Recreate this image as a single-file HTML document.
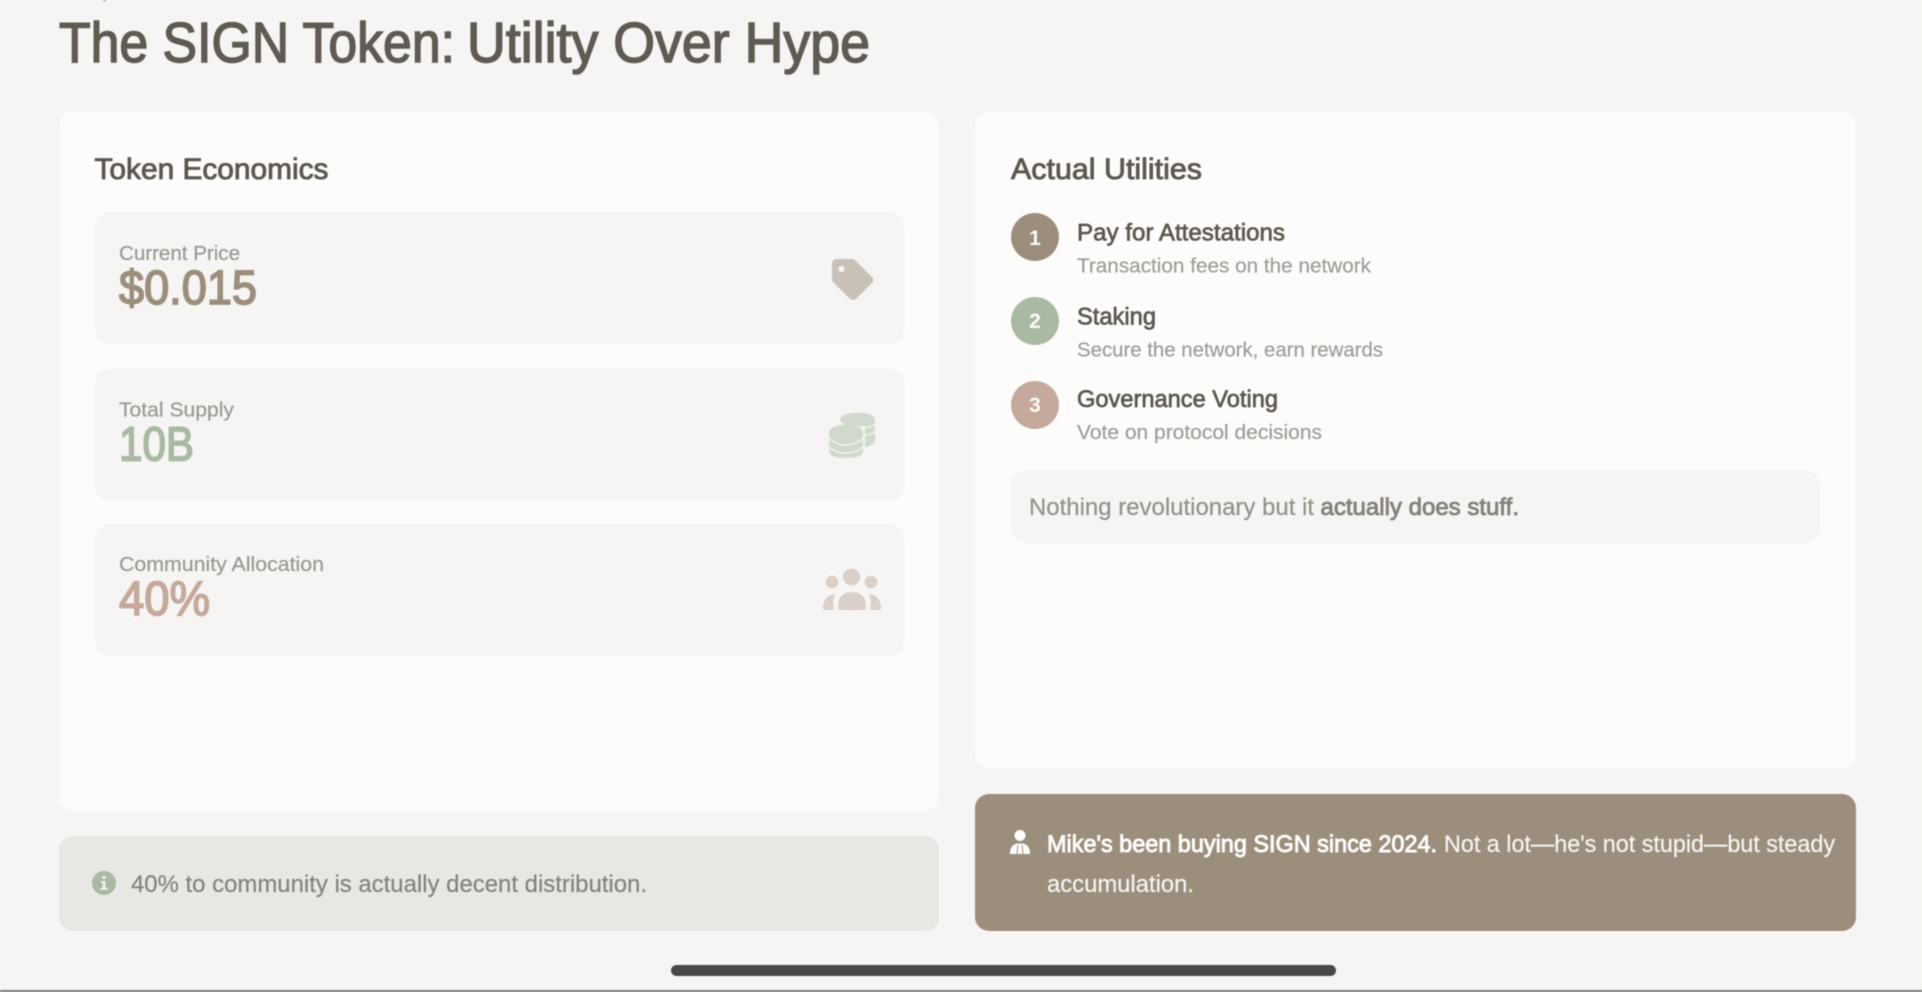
<!DOCTYPE html>
<html lang="en">
<head>
<meta charset="utf-8">
<title>The SIGN Token: Utility Over Hype</title>
<style>
html,body{margin:0;padding:0;background:#f6f5f3;}
#page{position:relative;width:1922px;height:992px;overflow:hidden;background:#f6f5f3;filter:blur(.45px);}
.box{position:absolute;box-sizing:border-box;}
.card{background:#fdfcfa;border-radius:15px;}
.stat{background:#f6f5f3;border-radius:14px;left:95px;width:809px;height:132px;}
svg{position:absolute;left:0;top:0;}
text{font-family:"Liberation Sans",sans-serif;white-space:pre;}
</style>
</head>
<body>
<div id="page">
  <div class="box card" style="left:59px;top:111px;width:880px;height:700px"></div>
  <div class="box card" style="left:975px;top:111px;width:881px;height:658px"></div>
  <div class="box stat" style="top:212px"></div>
  <div class="box stat" style="top:369px"></div>
  <div class="box stat" style="top:524px"></div>
  <div class="box" style="left:1011px;top:470px;width:809px;height:73px;background:#f6f5f3;border-radius:14px"></div>
  <div class="box" style="left:59px;top:836px;width:880px;height:95px;background:#e7e8e3;border-radius:14px"></div>
  <div class="box" style="left:975px;top:794px;width:881px;height:137px;background:#9c8e7c;border-radius:14px"></div>
  <div class="box" style="left:671px;top:965px;width:665px;height:11px;background:#484846;border-radius:6px"></div>
  <div class="box" style="left:0;top:990px;width:1922px;height:2px;background:#7a7a78"></div>
  <div class="box" style="left:103px;top:0;width:3px;height:1px;background:#a5a29d"></div>

  <svg width="1922" height="992" viewBox="0 0 1922 992" xmlns="http://www.w3.org/2000/svg">
    <!-- heading -->
    <text x="59" y="62" font-size="57" fill="#5f5a52" stroke="#5f5a52" stroke-width="1.500" textLength="396" lengthAdjust="spacingAndGlyphs">The SIGN Token:</text>
    <text x="467" y="62" font-size="57" fill="#5f5a52" stroke="#5f5a52" stroke-width="1.500" textLength="403" lengthAdjust="spacingAndGlyphs">Utility Over Hype</text>

    <!-- left card -->
    <text x="94.500" y="179" font-size="29.500" fill="#5c5750" stroke="#5c5750" stroke-width=".85" textLength="234" lengthAdjust="spacingAndGlyphs">Token Economics</text>

    <text x="119" y="260" font-size="20.500" fill="#9b9893" stroke="#9b9893" stroke-width=".2" textLength="121" lengthAdjust="spacingAndGlyphs">Current Price</text>
    <text x="119" y="304" font-size="48" fill="#9c8e7c" stroke="#9c8e7c" stroke-width="1.700" textLength="138" lengthAdjust="spacingAndGlyphs">$0.015</text>

    <text x="119" y="416.500" font-size="20.500" fill="#9b9893" stroke="#9b9893" stroke-width=".2" textLength="115" lengthAdjust="spacingAndGlyphs">Total Supply</text>
    <text x="119" y="460.500" font-size="48" fill="#a9b9a3" stroke="#a9b9a3" stroke-width="1.700" textLength="75" lengthAdjust="spacingAndGlyphs">10B</text>

    <text x="119" y="571" font-size="20.500" fill="#9b9893" stroke="#9b9893" stroke-width=".2" textLength="205" lengthAdjust="spacingAndGlyphs">Community Allocation</text>
    <text x="119" y="615" font-size="48" fill="#c5a99a" stroke="#c5a99a" stroke-width="1.700" textLength="91" lengthAdjust="spacingAndGlyphs">40%</text>

    <!-- tag icon -->
    <path fill="#c9c1b8" d="M837 259H851Q854 259 856 261L871 276Q875 280 871 284L857 298Q853 302 849 298L834 283Q832 281 832 278V264Q832 259 837 259Z"/>
    <circle cx="841.500" cy="269" r="3" fill="#f6f5f3"/>

    <!-- coins icon -->
    <g fill="#d2d8cd">
      <ellipse cx="857.500" cy="419.500" rx="17.500" ry="7"/>
      <path d="M865 426Q871 425 875 421V442Q871 446 865 447Z"/>
      <path d="M829 432.500H863V451Q863 458 846 458Q829 458 829 451Z"/>
      <ellipse cx="846" cy="432.500" rx="17" ry="8"/>
    </g>
    <g fill="none" stroke="#f6f5f3" stroke-width="1.300">
      <path d="M862.500 428Q872 427.500 876 424"/>
      <path d="M864 435.500Q871 435 876 431"/>
      <path d="M828 437Q835 445 846 445Q857 445 864 437"/>
      <path d="M828 446Q835 453 846 453Q857 453 864 446"/>
    </g>

    <!-- people icon -->
    <g fill="#dacfc9">
      <circle cx="851.500" cy="577" r="8.500"/>
      <circle cx="832" cy="582" r="6.300"/>
      <circle cx="871" cy="582" r="6.300"/>
      <path d="M841 610Q838 610 838 607Q838 592 852 592Q866 592 866 607Q866 610 863 610Z"/>
      <path d="M835 594Q832 601 834 610H825Q823 610 823 608Q823 596 835 594Z"/>
      <path d="M869 594Q872 601 870 610H879Q881 610 881 608Q881 596 869 594Z"/>
    </g>

    <!-- right card -->
    <text x="1011" y="179" font-size="29.500" fill="#5c5750" stroke="#5c5750" stroke-width=".85" textLength="191" lengthAdjust="spacingAndGlyphs">Actual Utilities</text>

    <circle cx="1035" cy="237" r="24" fill="#9c8e7c"/>
    <circle cx="1035" cy="321" r="24" fill="#a9b9a3"/>
    <circle cx="1035" cy="405" r="24" fill="#c5a99a"/>
    <text x="1035" y="245" font-size="21" font-weight="700" fill="#fbfaf8" text-anchor="middle">1</text>
    <text x="1035" y="328" font-size="21" font-weight="700" fill="#fbfaf8" text-anchor="middle">2</text>
    <text x="1035" y="412" font-size="21" font-weight="700" fill="#fbfaf8" text-anchor="middle">3</text>

    <text x="1077" y="240.500" font-size="24.500" fill="#5c5750" stroke="#5c5750" stroke-width=".7" textLength="208" lengthAdjust="spacingAndGlyphs">Pay for Attestations</text>
    <text x="1077" y="272.500" font-size="20.500" fill="#a09d98" stroke="#a09d98" stroke-width=".2" textLength="294" lengthAdjust="spacingAndGlyphs">Transaction fees on the network</text>
    <text x="1077" y="324.500" font-size="24.500" fill="#5c5750" stroke="#5c5750" stroke-width=".7" textLength="79" lengthAdjust="spacingAndGlyphs">Staking</text>
    <text x="1077" y="356.500" font-size="20.500" fill="#a09d98" stroke="#a09d98" stroke-width=".2" textLength="306" lengthAdjust="spacingAndGlyphs">Secure the network, earn rewards</text>
    <text x="1077" y="407" font-size="24.500" fill="#5c5750" stroke="#5c5750" stroke-width=".7" textLength="201" lengthAdjust="spacingAndGlyphs">Governance Voting</text>
    <text x="1077" y="439" font-size="20.500" fill="#a09d98" stroke="#a09d98" stroke-width=".2" textLength="245" lengthAdjust="spacingAndGlyphs">Vote on protocol decisions</text>

    <text x="1029" y="515" font-size="24.500" fill="#94918b" stroke="#94918b" stroke-width=".2" textLength="285" lengthAdjust="spacingAndGlyphs">Nothing revolutionary but it</text>
    <text x="1320.500" y="515" font-size="24.500" fill="#85817a" stroke="#85817a" stroke-width=".85" textLength="198.500" lengthAdjust="spacingAndGlyphs">actually does stuff.</text>

    <!-- left alert -->
    <circle cx="104" cy="883" r="12" fill="#a9b9a3"/>
    <g fill="#eef0ea">
      <circle cx="104" cy="877.500" r="1.800"/>
      <path d="M101 881H105.500V888H107.500V890H100.500V888H102.500V883H101Z"/>
    </g>
    <text x="131" y="892" font-size="24.500" fill="#85837d" stroke="#85837d" stroke-width=".2" textLength="516" lengthAdjust="spacingAndGlyphs">40% to community is actually decent distribution.</text>

    <!-- right alert -->
    <g fill="#fefdfb">
      <circle cx="1020" cy="835.500" r="5.500"/>
      <path d="M1010 854Q1010 845 1017 843.500H1023Q1030 845 1030 854Z"/>
    </g>
    <path d="M1018 845L1017 854M1022 845L1023 854" stroke="#9c8e7c" stroke-width="1" fill="none"/>
    <text x="1047" y="852" font-size="24.500" fill="#fefdfb" stroke="#fefdfb" stroke-width=".9" textLength="390" lengthAdjust="spacingAndGlyphs">Mike's been buying SIGN since 2024.</text>
    <text x="1444" y="852" font-size="24.500" fill="#f7f5f1" stroke="#f7f5f1" stroke-width=".2" textLength="391" lengthAdjust="spacingAndGlyphs">Not a lot—he's not stupid—but steady</text>
    <text x="1047" y="892" font-size="24.500" fill="#f7f5f1" stroke="#f7f5f1" stroke-width=".2" textLength="147" lengthAdjust="spacingAndGlyphs">accumulation.</text>
  </svg>
</div>
</body>
</html>
